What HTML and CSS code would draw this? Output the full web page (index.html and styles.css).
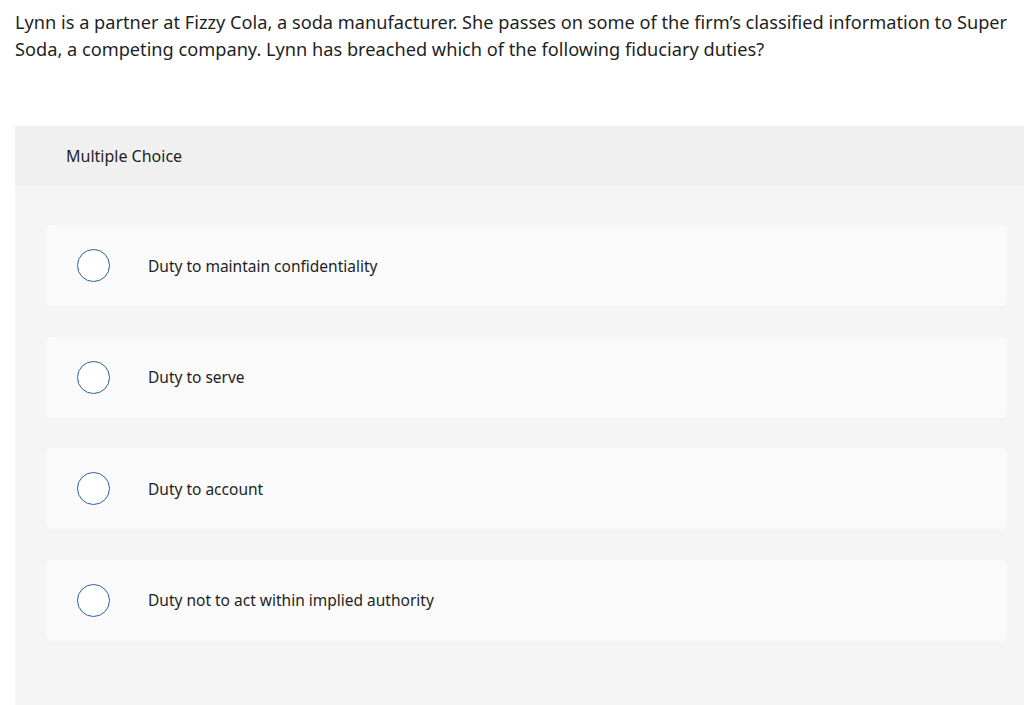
FILE: index.html
```html
<!DOCTYPE html>
<html>
<head>
<meta charset="utf-8">
<link rel="stylesheet" href="styles.css">
</head>
<body>
<div class="page">
  <p class="question">Lynn is a partner at Fizzy Cola, a soda manufacturer. She passes on some of the firm’s classified information to Super Soda, a competing company. Lynn has breached which of the following fiduciary duties?</p>
  <div class="panel">
    <div class="panel-head">Multiple Choice</div>
    <div class="panel-body">
      <div class="option"><span class="radio"></span><span class="label">Duty to maintain confidentiality</span></div>
      <div class="option"><span class="radio"></span><span class="label">Duty to serve</span></div>
      <div class="option"><span class="radio"></span><span class="label">Duty to account</span></div>
      <div class="option"><span class="radio"></span><span class="label">Duty not to act within implied authority</span></div>
    </div>
  </div>
</div>
</body>
</html>
```
FILE: styles.css
```css
html, body {
  margin: 0;
  padding: 0;
  overflow: hidden;
  background: #ffffff;
}
.page {
  width: 1024px;
  height: 705px;
  overflow: hidden;
  font-family: "Noto Sans", "Open Sans", sans-serif;
  font-variant-ligatures: none;
  color: #222222;
}
.question {
  margin: 0;
  padding: 9px 0 0 15px;
  width: 1003px;
  font-size: 18.2px;
  line-height: 27px;
  color: #1f1f1f;
}
.panel {
  margin: 63px 0 0 15px;
  width: 1023px;
  background: #f5f5f5;
  height: 600px;
}
.panel-head {
  height: 60px;
  background: #f0f0f0;
  display: flex;
  align-items: center;
  padding-left: 51px;
  font-size: 16px;
  color: #1f1f1f;
}
.panel-body {
  padding: 39px 31px 0 31px;
  display: flex;
  flex-direction: column;
  gap: 30.5px;
}
.option {
  height: 81px;
  background: #fafafa;
  border-radius: 5px;
  display: flex;
  align-items: center;
  padding-left: 31px;
}
.radio {
  width: 31px;
  height: 31px;
  border: 1.5px solid #2e5f98;
  border-radius: 50%;
  background: #ffffff;
  flex: none;
}
.label {
  margin-left: 38px;
  font-size: 15.5px;
  color: #1f1f1f;
}
```
